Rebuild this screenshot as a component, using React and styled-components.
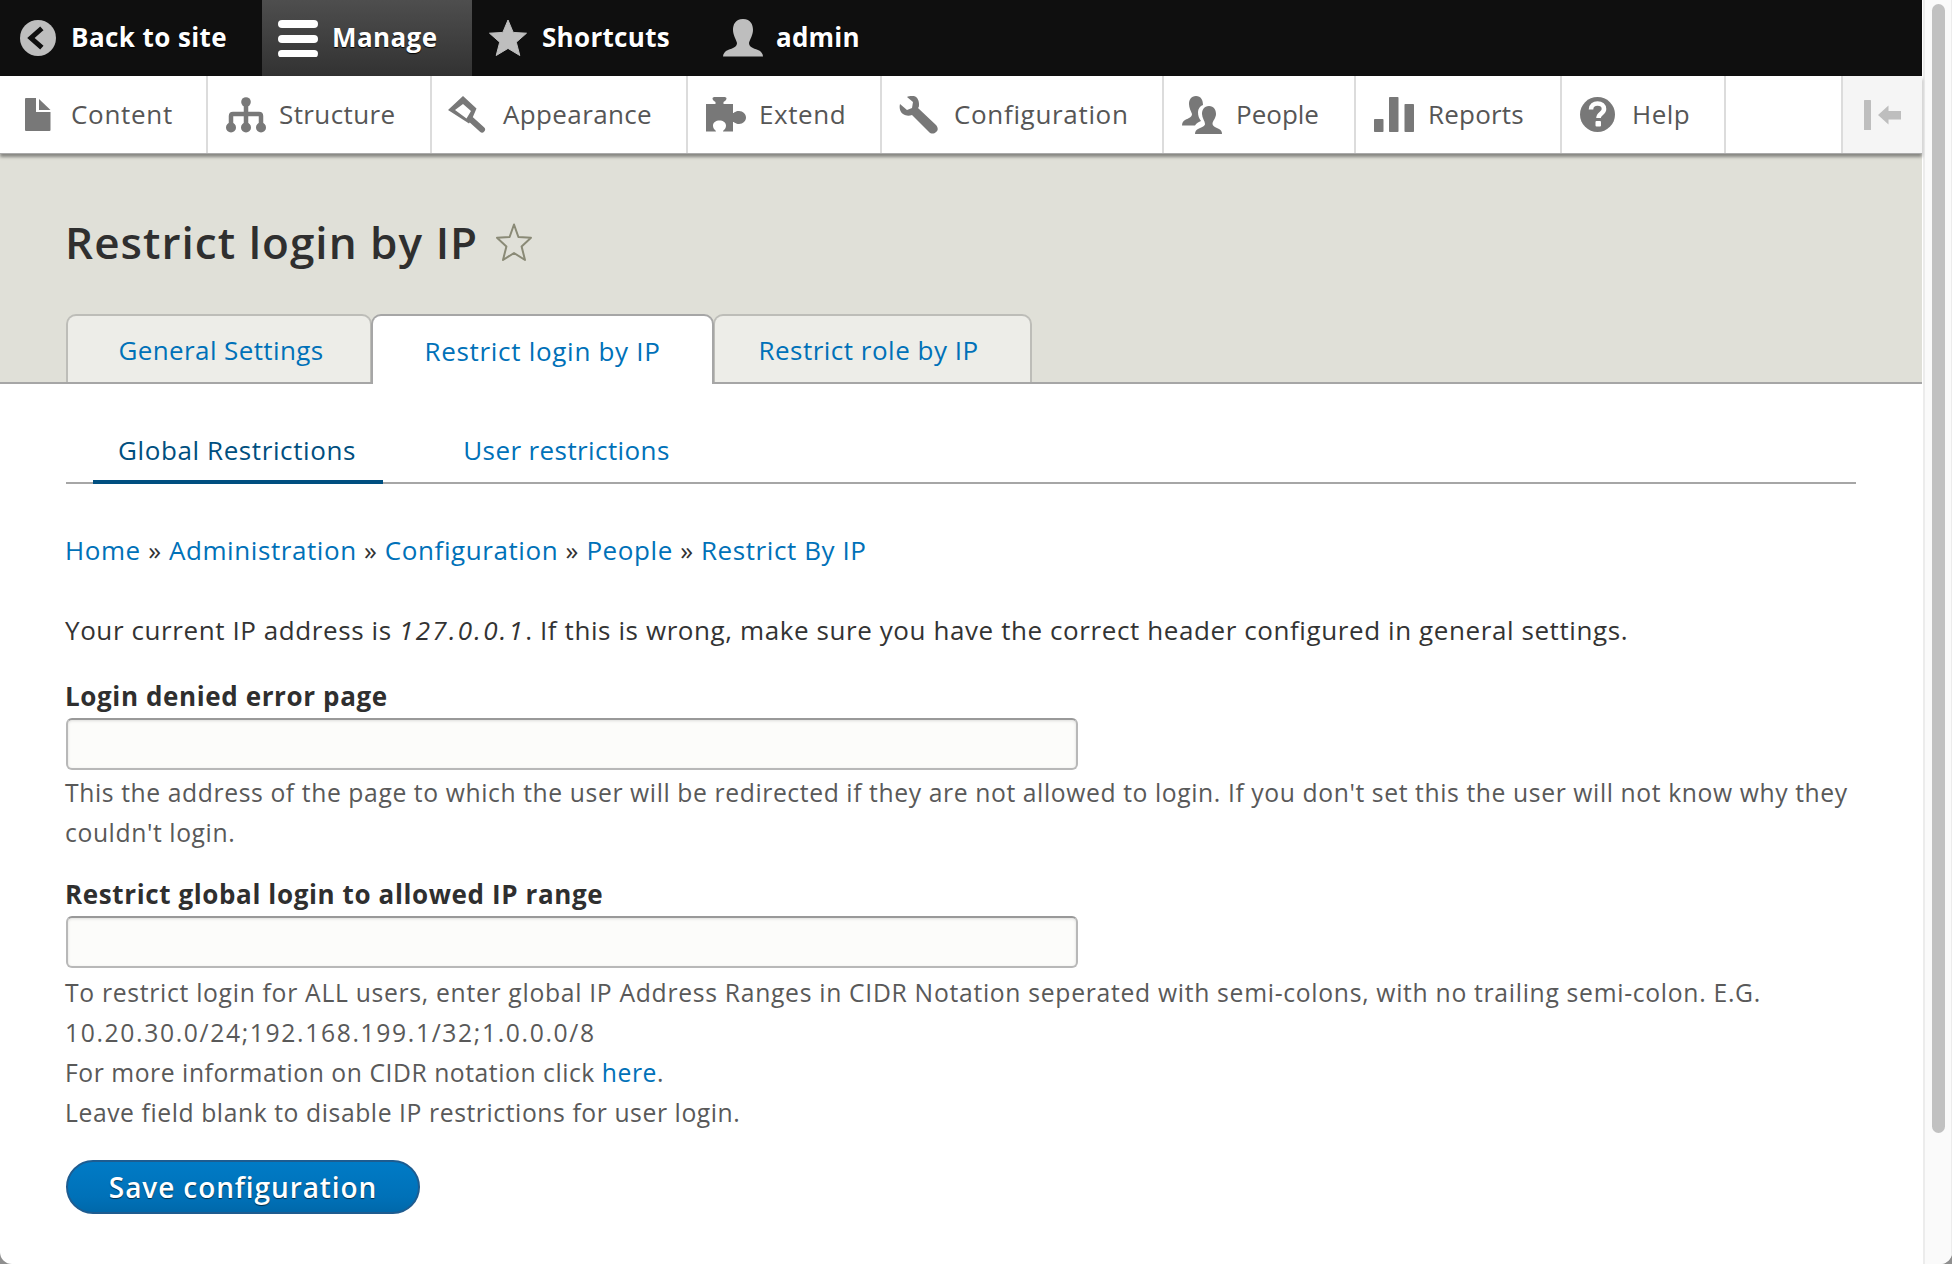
import React from "react";
import styled, { createGlobalStyle } from "styled-components";

const Global = createGlobalStyle`
  html, body { margin: 0; padding: 0; background: #8f8f8f; }
  body { font-family: "Open Sans", "Liberation Sans", sans-serif; font-size: 26px; color: #333; }
  * { box-sizing: border-box; }
  a { color: #0071b8; text-decoration: none; }
`;

const Windowed = styled.div`
  display: flex; width: 1952px; height: 1264px; overflow: hidden;
  background: #fff; border-radius: 0 0 12px 12px;
`;
const Main = styled.div`width: 1922px; flex: none; display: flex; flex-direction: column;`;
const Scrollbar = styled.div`
  flex: 1; margin-left: 1px; padding: 4px 6px 0 7px; background: #fafafa;
  border-left: 2px solid #ececec; border-right: 1px solid #ececec;
`;
const Thumb = styled.div`height: 1129px; background: #c1c1c1; border-radius: 8px;`;

const TopBar = styled.nav`display: flex; height: 76px; background: #0f0f0f;`;
const TopItem = styled.a`
  display: flex; align-items: center; width: ${p => p.$w}px; padding-left: ${p => p.$pad}px;
  gap: ${p => p.$gap}px; color: #fff; font-weight: 700; font-size: 26px;
  background: ${p => (p.$active ? "linear-gradient(#4e4e4e, #323232)" : "transparent")};
  text-shadow: 0 1px 1px #000;
`;
const TopLabel = styled.span`margin-bottom: 2px; letter-spacing: ${p => p.$ls}px;`;
const TopIcon = styled.svg`display: block; flex: none; fill: ${p => p.$fill || "#bebebe"};`;

const MenuBar = styled.nav`
  display: flex; height: 78px; background: #fff; position: relative; z-index: 1;
  box-shadow: 0 3px 3px rgba(0, 0, 0, .4);
  border-bottom: 1px solid #aaa;
`;
const MenuItem = styled.a`
  display: flex; align-items: center; width: ${p => p.$w}px; padding-left: ${p => p.$pad}px;
  border-right: 2px solid #dcdcdc; color: #565656; font-size: 26px; flex: none;
`;
const MenuLabel = styled.span`margin-bottom: 2px; letter-spacing: ${p => p.$ls}px;`;
const MenuSlot = styled.span`display: flex; flex: none; width: ${p => p.$slot}px; align-items: center;`;
const MenuIcon = styled.svg`display: block; flex: none; fill: #787878;`;
const MenuSpacer = styled.div`flex: 1; border-right: 2px solid #dcdcdc;`;
const Collapse = styled.button`
  width: 79px; flex: none; border: 0; background: #f5f5f5; padding: 0 0 0 20px;
  display: flex; align-items: center;
`;

const Header = styled.header`
  height: 230px; padding: 0 0 0 66px; background: #e0e0d8; border-bottom: 2px solid #a6a6a6;
  display: flex; flex-direction: column; justify-content: space-between;
`;
const TitleRow = styled.div`display: flex; align-items: center; gap: 18px; margin-top: 63px;`;
const Title = styled.h1`margin: 0 0 0 -1px; font-size: 44px; line-height: 50px; font-weight: 600; color: #2f2f2f; letter-spacing: 1.05px;`;
const Tabs = styled.ul`display: flex; list-style: none; margin: 0 0 -2px; padding: 0;`;
const Tab = styled.li`
  width: ${p => p.$w}px; height: ${p => (p.$active ? 70 : 68)}px; margin-left: ${p => (p.$first ? 0 : -1)}px;
  margin-bottom: ${p => (p.$active ? 0 : 2)}px; padding: 1px ${p => p.$right || 0}px 0 ${p => p.$left || 0}px;
  display: flex; align-items: center; justify-content: center; font-size: 26px;
  background: ${p => (p.$active ? "#fff" : "#edede8")};
  border: 2px solid ${p => (p.$active ? "#a6a6a6" : "#bdbdb8")}; border-bottom: 0; border-radius: 10px 10px 0 0;
  position: relative; z-index: ${p => (p.$active ? 1 : 0)};
`;
const TabLink = styled.a`color: #0071b8; letter-spacing: ${p => p.$ls}px;`;

const Content = styled.main`flex: 1; padding: 0 66px; width: 1922px;`;
const SubTabs = styled.ul`
  display: flex; list-style: none; margin: 0; padding: 0 0 0 27px; height: 100px; width: 1790px;
  align-items: flex-end; border-bottom: 2px solid #a6a6a6;
`;
const SubTab = styled.li`
  width: ${p => p.$w}px; height: 62px; margin-right: ${p => p.$mr || 0}px; margin-bottom: -2px;
  display: flex; align-items: flex-start; justify-content: center; padding: 10px ${p => p.$right || 0}px 0 ${p => p.$left || 0}px;
  border-bottom: 4px solid ${p => (p.$active ? "#004f80" : "transparent")};
`;
const SubLink = styled.a`color: ${p => (p.$active ? "#004f80" : "#0071b8")}; letter-spacing: ${p => p.$ls}px;`;

const Crumbs = styled.div`margin: 46px 0 0 -1px; line-height: 40px; letter-spacing: .58px; color: #333;`;
const Paragraph = styled.p`margin: 40px 0 0 -1px; line-height: 40px; letter-spacing: .59px;`;
const Address = styled.em`letter-spacing: 2.3px;`;
const Field = styled.div`margin-top: ${p => p.$mt}px;`;
const Label = styled.label`display: block; margin-left: -1px; font-weight: 700; line-height: 40px; letter-spacing: .62px; color: #2f2f2f;`;
const Input = styled.input`
  display: block; width: 1012px; height: 52px; margin-top: 2px; padding: 0 10px;
  background: #fcfcfa; border: 2px solid #b8b8b8; border-top-color: #999; border-radius: 6px;
  box-shadow: inset 0 1px 3px rgba(0, 0, 0, .12); font: inherit;
`;
const Description = styled.div`margin: ${p => p.$mt}px -20px 0 -1px; font-size: 24.7px; line-height: 40px; color: #595959;`;
const DescLine = styled.span`display: block; letter-spacing: ${p => p.$ls}px; white-space: nowrap;`;
const Save = styled.button`
  display: block; margin-top: 27px; width: 354px; height: 54px; padding: 0;
  border: 2px solid #1e5c90; border-radius: 27px; color: #fff;
  background: linear-gradient(#007bc6, #0071b8 70%, #0068aa);
  font: 600 28px/1 "Open Sans", "Liberation Sans", sans-serif; letter-spacing: .9px;
  text-shadow: 0 1px 1px rgba(0, 0, 0, .6);
`;

const UserPath = "M20 0C12 0 10 6 10 11C10 16 13 20 14 24C14 28 10 29 5 31C2 32 0 35 0 37.5L40 37.5C40 35 38 32 35 31C30 29 26 28 26 24C27 20 30 16 30 11C30 6 28 0 20 0Z";

const Back = () => (
  <TopIcon width="36" height="36" viewBox="0 0 36 36">
    <circle cx="18" cy="18" r="18" />
    <path d="M20 10L11 18L20 26" fill="none" stroke="#0f0f0f" strokeWidth="5" strokeLinecap="square" />
  </TopIcon>
);
const Burger = () => (
  <TopIcon $fill="#fff" width="40" height="37" viewBox="0 0 40 37">
    <rect width="40" height="8" rx="4" />
    <rect y="15" width="40" height="8" rx="4" />
    <rect y="30" width="40" height="7.5" rx="3.75" />
  </TopIcon>
);
const StarFill = () => (
  <TopIcon width="38" height="38" viewBox="0 0 38 38">
    <path d="M19 1L24.2 13.4L37.5 14.2L27.3 23.2L30.8 36.5L19 29.4L7.2 36.5L10.7 23.2L.5 14.2L13.8 13.4Z" stroke="#bebebe" strokeWidth="1" strokeLinejoin="round" />
  </TopIcon>
);
const UserIcon = () => (
  <TopIcon width="40" height="38" viewBox="0 0 40 38"><path d={UserPath} /></TopIcon>
);

const ContentIcon = () => (
  <MenuIcon width="26" height="33" viewBox="0 0 26 33">
    <path d="M1 0H11V14H25.5V32a1 1 0 0 1-1 1H1a1 1 0 0 1-1-1V1a1 1 0 0 1 1-1Z" />
    <path d="M14 1L25.5 12H14Z" />
  </MenuIcon>
);
const StructureIcon = () => (
  <MenuIcon width="40" height="36" viewBox="0 0 40 36">
    <circle cx="20" cy="5" r="4.8" />
    <circle cx="5" cy="30.5" r="5" />
    <circle cx="20" cy="30.5" r="5" />
    <circle cx="35" cy="30.5" r="5" />
    <path d="M20 6V30M5 30V19Q5 17 7 17H33Q35 17 35 19V30" fill="none" stroke="#787878" strokeWidth="4.5" />
  </MenuIcon>
);
const BrushIcon = () => (
  <MenuIcon width="38" height="37" viewBox="0 0 38 37">
    <path fillRule="evenodd" d="M15 0L28.5 12.5L24 23L21 27.5L0 14ZM7 14L18.5 22.5L23 15L15 8Z" />
    <path d="M23.5 24L34 33.5" fill="none" stroke="#787878" strokeWidth="6" strokeLinecap="round" />
  </MenuIcon>
);
const PuzzleIcon = () => (
  <MenuIcon width="40" height="35" viewBox="0 0 40 35">
    <path d="M0 7H9.5V5C8 4 6.5 3 6.5 1.5C6.5 .5 7.5 0 9 0H18C19.5 0 20.5 .5 20.5 1.5C20.5 3 19 4 17.5 5V7H27V16C28.5 16 29 14 33 14C37 14 40 17 40 20.5C40 24 37 27 33 27C29.5 27 28.5 25 27 25V34.5H17C17 33 20 32.5 20 28.5C20 25.5 17 23.5 13.5 23.5C10 23.5 7 25.5 7 28.5C7 32.5 10 33 10 34.5H0Z" />
  </MenuIcon>
);
const WrenchIcon = () => (
  <MenuIcon width="39" height="38" viewBox="0 0 39 38">
    <path d="M13 0C17 -.5 20 3 20 8C20 10 20 11 19 12L37 29C39.5 32 39 35 37 36C35 38 32 38 30 36L13 19C10 20 7 20 4 18C1 16 0 12 1 8L8 14L13 12L14 6L8 1C9 0 11 0 13 0Z" />
  </MenuIcon>
);
const PeopleIcon = () => (
  <MenuIcon width="40" height="38" viewBox="0 0 40 38">
    <path d="M14 0C9 0 7 4 7 8C7 12 9 15 10 18C10 21 7 22 3 24C1 25 0 27 0 29.5H13C14 27 17 26 19 25C17 22 16 20 16 16C16 13 18 10 21 9C21 4 19 0 14 0Z" />
    <path d="M27 10C22 10 20 14 20 18C20 22 23 25 23 28C23 30 20 31 17 32.5C14 33.5 13 35.5 13 38H40C40 35.5 39 33.5 36 32.5C33 31 30.5 30 30.5 28C30.5 25 34 22 34 18C34 14 32 10 27 10Z" />
  </MenuIcon>
);
const ReportsIcon = () => (
  <MenuIcon width="40" height="35" viewBox="0 0 40 35">
    <rect y="22" width="9.5" height="13" rx=".8" />
    <rect x="15" width="9.5" height="35" rx=".8" />
    <rect x="30.5" y="7" width="9.5" height="28" rx=".8" />
  </MenuIcon>
);
const HelpIcon = () => (
  <MenuIcon width="35" height="35" viewBox="0 0 35 35">
    <circle cx="17.5" cy="17.5" r="17.5" />
    <path d="M11 12.5C11 8.5 14 6.5 17.5 6.5C21.5 6.5 24 8.8 24 12C24 16.5 18.5 16.5 18.5 21" fill="none" stroke="#fff" strokeWidth="4.6" />
    <rect x="15.5" y="24" width="5.5" height="5.5" rx="1" fill="#fff" />
  </MenuIcon>
);
const CollapseIcon = () => (
  <TopIcon width="38" height="30" viewBox="0 0 38 30">
    <rect x="1" width="7" height="30" rx=".5" />
    <path d="M15 15L25.5 5.5V11H38V19.5H25.5V24.5Z" />
  </TopIcon>
);
const StarOutline = () => (
  <TopIcon $fill="none" width="36" height="39" viewBox="0 0 36 39">
    <path d="M18 1.5L22.4 14L35 14.8L25.6 23.4L29 37L18 30L7 37L10.4 23.4L1 14.8L13.6 14Z" stroke="#8a8a76" strokeWidth="2" strokeLinejoin="round" />
  </TopIcon>
);

const topItems = [
  { label: "Back to site", w: 262, pad: 20, gap: 15, ls: 0.42, Icon: Back },
  { label: "Manage", w: 210, pad: 16, gap: 14, ls: 0.4, active: true, Icon: Burger },
  { label: "Shortcuts", w: 234, pad: 17, gap: 15, ls: 0.3, Icon: StarFill },
  { label: "admin", w: 200, pad: 17, gap: 13, ls: 0.2, Icon: UserIcon },
];
const menu = [
  { label: "Content", w: 208, pad: 25, slot: 46, ls: 0.7, Icon: ContentIcon },
  { label: "Structure", w: 224, pad: 18, slot: 53, ls: 0.4, Icon: StructureIcon },
  { label: "Appearance", w: 256, pad: 16, slot: 55, ls: 0.37, Icon: BrushIcon },
  { label: "Extend", w: 194, pad: 18, slot: 53, ls: 0.6, Icon: PuzzleIcon },
  { label: "Configuration", w: 282, pad: 17, slot: 55, ls: 0.67, Icon: WrenchIcon },
  { label: "People", w: 192, pad: 18, slot: 54, ls: 0, Icon: PeopleIcon },
  { label: "Reports", w: 206, pad: 18, slot: 54, ls: 0.2, Icon: ReportsIcon },
  { label: "Help", w: 164, pad: 18, slot: 52, ls: 0.5, Icon: HelpIcon },
];

export default function App() {
  return (
    <Windowed>
      <Global />
      <Main>
        <TopBar>
          {topItems.map(({ label, Icon, w, pad, gap, active, ls }) => (
            <TopItem key={label} $w={w} $pad={pad} $gap={gap} $active={active}>
              <Icon />
              <TopLabel $ls={ls}>{label}</TopLabel>
            </TopItem>
          ))}
        </TopBar>
        <MenuBar>
          {menu.map(({ label, Icon, w, pad, slot, ls }) => (
            <MenuItem key={label} $w={w} $pad={pad}>
              <MenuSlot $slot={slot}><Icon /></MenuSlot>
              <MenuLabel $ls={ls}>{label}</MenuLabel>
            </MenuItem>
          ))}
          <MenuSpacer />
          <Collapse aria-label="Collapse"><CollapseIcon /></Collapse>
        </MenuBar>
        <Header>
          <TitleRow>
            <Title>Restrict login by IP</Title>
            <StarOutline />
          </TitleRow>
          <Tabs>
            <Tab $first $w={306} $left={4}><TabLink $ls={0.4}>General Settings</TabLink></Tab>
            <Tab $active $w={343}><TabLink $ls={0.7}>Restrict login by IP</TabLink></Tab>
            <Tab $w={319} $right={8}><TabLink $ls={0.5}>Restrict role by IP</TabLink></Tab>
          </Tabs>
        </Header>
        <Content>
          <SubTabs>
            <SubTab $active $w={290} $mr={40} $right={2}><SubLink $active $ls={0.6}>Global Restrictions</SubLink></SubTab>
            <SubTab $w={285} $left={2}><SubLink $ls={0.4}>User restrictions</SubLink></SubTab>
          </SubTabs>
          <Crumbs>
            <a>Home</a> » <a>Administration</a> » <a>Configuration</a> » <a>People</a> » <a>Restrict By IP</a>
          </Crumbs>
          <Paragraph>
            Your current IP address is <Address>127.0.0.1</Address>. If this is wrong, make sure you have the correct header configured in general settings.
          </Paragraph>
          <Field $mt={26}>
            <Label>Login denied error page</Label>
            <Input />
            <Description $mt={3}>
              <DescLine $ls={0.6}>This the address of the page to which the user will be redirected if they are not allowed to login. If you don't set this the user will not know why they</DescLine>
              <DescLine $ls={0.6}>couldn't login.</DescLine>
            </Description>
          </Field>
          <Field $mt={21}>
            <Label>Restrict global login to allowed IP range</Label>
            <Input />
            <Description $mt={5}>
              <DescLine $ls={0.7}>To restrict login for ALL users, enter global IP Address Ranges in CIDR Notation seperated with semi-colons, with no trailing semi-colon. E.G.</DescLine>
              <DescLine $ls={1.63}>10.20.30.0/24;192.168.199.1/32;1.0.0.0/8</DescLine>
              <DescLine $ls={0.55}>For more information on CIDR notation click <a>here</a>.</DescLine>
              <DescLine $ls={0.58}>Leave field blank to disable IP restrictions for user login.</DescLine>
            </Description>
          </Field>
          <Save>Save configuration</Save>
        </Content>
      </Main>
      <Scrollbar><Thumb /></Scrollbar>
    </Windowed>
  );
}
